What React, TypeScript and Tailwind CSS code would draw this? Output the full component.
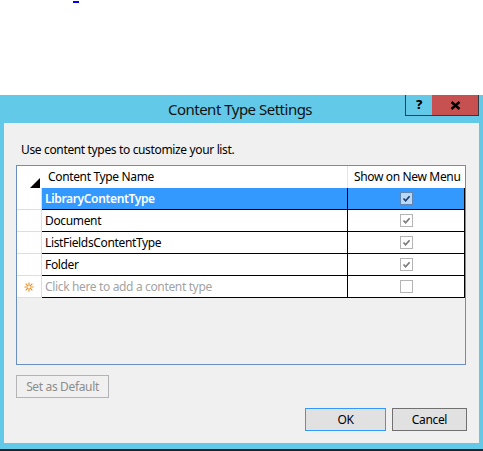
import { ReactNode } from "react";

type Row = { name: string; checked: boolean; selected?: boolean };

const ROWS: Row[] = [
  { name: "LibraryContentType", checked: true, selected: true },
  { name: "Document", checked: true },
  { name: "ListFieldsContentType", checked: true },
  { name: "Folder", checked: true },
];

function CheckBox({ checked, active }: { checked: boolean; active?: boolean }) {
  return (
    <div
      className={
        active
          ? "w-[13px] h-[13px] border border-[#5f86b5] bg-[#b9d9f7] flex items-center justify-center"
          : "w-[13px] h-[13px] border border-[#b4b4b4] bg-white flex items-center justify-center"
      }
    >
      {checked && (
        <svg width="11" height="11" viewBox="0 0 11 11">
          <path
            d="M2.5 5.5 L4.6 7.8 L8.6 3.2"
            fill="none"
            stroke={active ? "#1d3f6e" : "#7a7a7a"}
            strokeWidth="1.7"
          />
        </svg>
      )}
    </div>
  );
}

function NewRowMark() {
  return (
    <svg width="10" height="10" viewBox="0 0 10 10">
      <g stroke="#e3952a" strokeWidth="1.1" strokeLinecap="round">
        <line x1="5" y1="0.8" x2="5" y2="3.4" />
        <line x1="5" y1="6.6" x2="5" y2="9.2" />
        <line x1="0.8" y1="5" x2="3.4" y2="5" />
        <line x1="6.6" y1="5" x2="9.2" y2="5" />
        <line x1="2" y1="2" x2="3.8" y2="3.8" />
        <line x1="6.2" y1="6.2" x2="8" y2="8" />
        <line x1="8" y1="2" x2="6.2" y2="3.8" />
        <line x1="3.8" y1="6.2" x2="2" y2="8" />
      </g>
    </svg>
  );
}

function GridRow({ head, name, check, selected }: { head?: ReactNode; name: ReactNode; check: ReactNode; selected?: boolean }) {
  return (
    <div className="flex h-[22px]">
      <div className="w-[25px] bg-white border-r border-b border-[#dedede] flex items-center justify-center">{head}</div>
      <div
        className={
          selected
            ? "w-[305px] bg-[#3399ff] text-white font-semibold border-b border-black pl-[3px] flex items-center"
            : "w-[305px] bg-white border-b border-black pl-[3px] flex items-center"
        }
      >
        {name}
      </div>
      <div
        className={
          selected
            ? "w-[118px] bg-[#3399ff] border-l border-r border-b border-black flex items-center justify-center"
            : "w-[118px] bg-white border-l border-r border-b border-black flex items-center justify-center"
        }
      >
        {check}
      </div>
    </div>
  );
}

export default function App() {
  return (
    <div className="w-[483px] h-[451px] bg-white flex flex-col font-['Segoe_UI','Noto_Sans',sans-serif] text-[12px] tracking-[-0.35px] text-black whitespace-nowrap">
      <div className="h-[95px] shrink-0">
        <div className="ml-[73px] mt-[1px] w-[6px] h-[2px] bg-[#0000ff]" />
      </div>

      <div className="h-[354px] shrink-0 bg-[#63c9e9] flex flex-col px-[4px] pb-[6px]">
        {/* title bar */}
        <div className="relative h-[28px] shrink-0 flex items-center justify-center">
          <span className="text-[15px] tracking-[-0.5px] text-[#111] pr-[3px]">Content Type Settings</span>
          <div className="absolute top-0 right-0 flex h-[21px] border-l border-r border-b border-[#2d3b44]">
            <div className="w-[26px] flex items-center justify-center text-[13px] font-extrabold">?</div>
            <div className="w-[46px] bg-[#c75050] flex items-center justify-center">
              <svg width="11" height="9" viewBox="0 0 11 9">
                <path d="M1.5 1 L9.5 8 M9.5 1 L1.5 8" stroke="#000" strokeWidth="2.4" />
              </svg>
            </div>
          </div>
        </div>

        {/* dialog body */}
        <div className="flex-1 bg-[#f0f0f0] flex flex-col px-3">
          <div className="pt-[19px] pl-[5px] leading-[16px]">Use content types to customize your list.</div>

          <div className="mt-[7px] h-[200px] w-[450px] border border-[#6a8fbf] bg-[#f0f0f0] flex flex-col">
            <div className="flex h-[22px] bg-white">
              <div className="w-[25px] flex items-end justify-end pr-[2px]">
                <svg width="10" height="10" viewBox="0 0 10 10">
                  <polygon points="10,0 10,10 0,10" fill="#000" />
                </svg>
              </div>
              <div className="w-[305px] pl-[6px] flex items-center">Content Type Name</div>
              <div className="w-[118px] pl-[6px] border-l border-[#e5e5e5] flex items-center">Show on New Menu</div>
            </div>

            {ROWS.map((row) => (
              <GridRow
                key={row.name}
                name={row.name}
                selected={row.selected}
                check={<CheckBox checked={row.checked} active={row.selected} />}
              />
            ))}
            <GridRow
              head={<NewRowMark />}
              name={<span className="text-[#a3a3a3]">Click here to add a content type</span>}
              check={<CheckBox checked={false} />}
            />
          </div>

          <div className="mt-[10px]">
            <button className="w-[93px] h-[23px] border border-[#b4b4b4] bg-[#f0f0f0] text-[#8c8c8c]">Set as Default</button>
          </div>

          <div className="mt-[10px] flex justify-end gap-[6px]">
            <button className="w-[81px] h-[23px] border border-[#3399ff] bg-[#e1e1e1]">OK</button>
            <button className="w-[75px] h-[23px] border border-[#707070] bg-[#e1e1e1]">Cancel</button>
          </div>
        </div>
      </div>

      <div className="h-[2px] bg-[#222]" />
    </div>
  );
}
